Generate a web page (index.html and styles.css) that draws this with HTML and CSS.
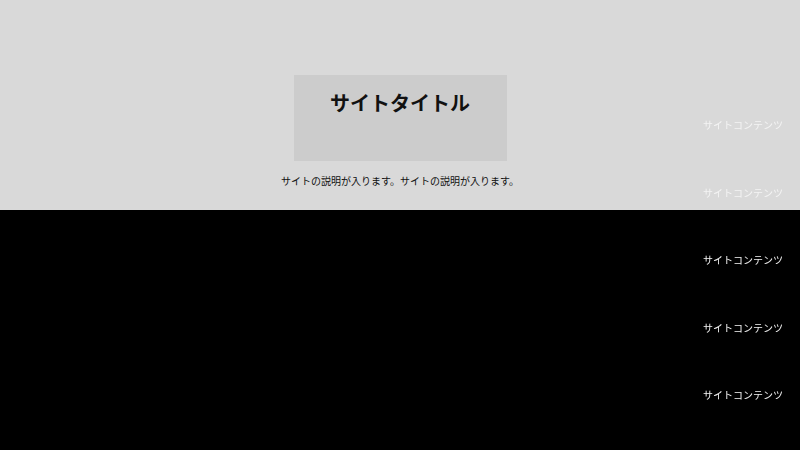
FILE: index.html
```html
<!DOCTYPE html>
<html lang="ja">
<head>
<meta charset="utf-8">
<title>サイトタイトル</title>
<link rel="stylesheet" href="styles.css">
</head>
<body>
  <header class="site-header">
    <div class="title-box">
      <h1 class="site-title">サイトタイトル</h1>
    </div>
    <p class="site-desc">サイトの説明が入ります。サイトの説明が入ります。</p>
  </header>
  <main class="site-main"></main>
  <nav class="side-nav">
    <ul class="nav-list">
      <li class="nav-item">サイトコンテンツ</li>
      <li class="nav-item">サイトコンテンツ</li>
      <li class="nav-item">サイトコンテンツ</li>
      <li class="nav-item">サイトコンテンツ</li>
      <li class="nav-item">サイトコンテンツ</li>
    </ul>
  </nav>
</body>
</html>
```
FILE: styles.css
```css
html, body {
  margin: 0;
  padding: 0;
  width: 800px;
  height: 450px;
  overflow: hidden;
  background: #000;
  font-family: "Noto Sans CJK JP", "Noto Sans", sans-serif;
}

.site-header {
  height: 210px;
  box-sizing: border-box;
  padding-top: 75px;
  background: #d9d9d9;
  display: flex;
  flex-direction: column;
  align-items: center;
}

.title-box {
  width: 213px;
  height: 86px;
  box-sizing: border-box;
  padding-top: 13px;
  background: #cccccc;
  display: flex;
  justify-content: center;
}

.site-title {
  margin: 0;
  font-size: 20px;
  line-height: 29px;
  font-weight: 700;
  color: #111;
}

.site-desc {
  margin: 12px 0 0;
  font-size: 10px;
  line-height: 15px;
  color: #111;
}

.site-main {
  height: 240px;
}

/* fixed menu laid over the page on the right */
.side-nav {
  position: fixed;
  top: 0;
  right: 0;
}

.nav-list {
  list-style: none;
  margin: 0;
  padding: 117px 17px 0 0;
  display: flex;
  flex-direction: column;
  gap: 52.5px;
}

.nav-item {
  font-size: 10px;
  line-height: 15px;
  color: #f4f4f4;
  text-align: right;
}
```
